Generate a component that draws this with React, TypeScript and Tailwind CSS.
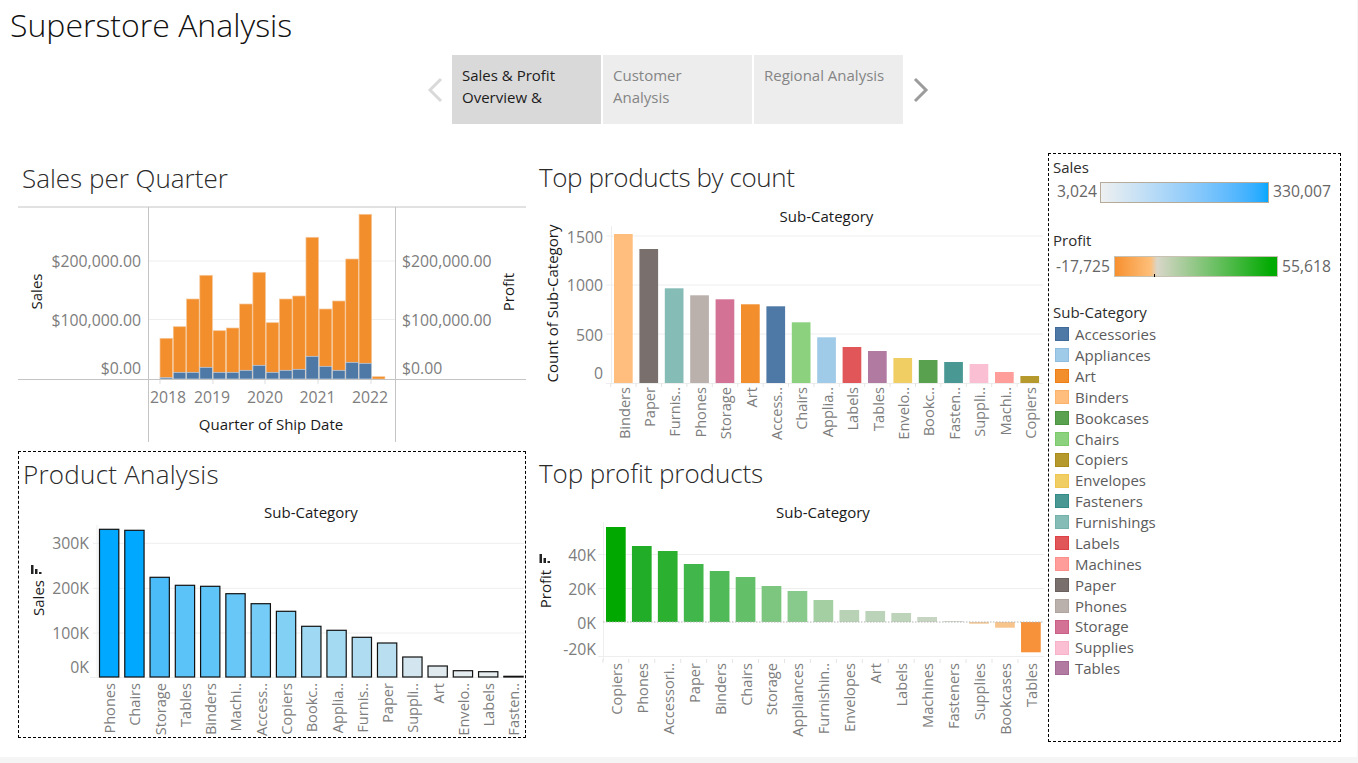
const barColor = "#00a8ff";

const quarters = [
  [338.3, 377.7], [326.7, 372.3], [299, 372.3], [275.3, 367.3], [330.7, 372.3], [328, 372.3],
  [304, 370.3], [272.3, 365.3], [322.7, 372.3], [299, 370.3], [296, 369.3], [237.3, 356.3],
  [309, 366.3], [301, 370.3], [259, 362.3], [214.3, 363.3], [376.7, 379],
];

const salesBars = [
  ["Phones", 529.3, barColor], ["Chairs", 530.3, barColor], ["Storage", 577.3, "#4bbcf8"],
  ["Tables", 585.3, "#5cc3f8"], ["Binders", 586.3, "#5fc4f8"], ["Machi..", 593.7, "#68c7f7"],
  ["Access..", 603.7, "#75ccf6"], ["Copiers", 611.3, "#83d0f5"], ["Bookc..", 626.3, "#9ed8f3"],
  ["Applia..", 630.3, "#a5daf3"], ["Furnis..", 637.3, "#b0dcf1"], ["Paper", 643, "#b9deef"],
  ["Suppli..", 657, "#d3e5ef"], ["Art", 666, "#dfe9ee"], ["Envelo..", 670.7, "#e5ecef"],
  ["Labels", 671.7, "#e7edef"], ["Fasten..", 676.3, "#eef0f0"],
] as const;

const countBars = [
  ["Binders", 234, "#ffbe7d"], ["Paper", 249, "#79706e"], ["Furnis..", 288.3, "#86bcb6"],
  ["Phones", 295.3, "#bab0ac"], ["Storage", 299.3, "#d37295"], ["Art", 304.3, "#f28e2b"],
  ["Access..", 306.3, "#4e79a7"], ["Chairs", 322.3, "#8cd17d"], ["Applia..", 337.3, "#a0cbe8"],
  ["Labels", 347, "#e15759"], ["Tables", 351, "#b07aa1"], ["Envelo..", 358, "#f1ce63"],
  ["Bookc..", 360, "#59a14f"], ["Fasten..", 362, "#499894"], ["Suppli..", 364, "#fabfd2"],
  ["Machi..", 372, "#ff9d9a"], ["Copiers", 376, "#b6992d"],
] as const;

const profitBars = [
  ["Copiers", 527, "#00a800"], ["Phones", 546, "#22ad28"], ["Accessori..", 551, "#2bb02f"],
  ["Paper", 564, "#41b74b"], ["Binders", 571, "#50ba58"], ["Chairs", 577, "#63c068"],
  ["Storage", 586, "#7cc680"], ["Appliances", 591, "#88c98c"], ["Furnishin..", 600, "#a3cfa2"],
  ["Envelopes", 610, "#b8d2b5"], ["Art", 611, "#bbd3b8"], ["Labels", 613, "#bdd3ba"],
  ["Machines", 617, "#c6d5c2"], ["Fasteners", 621, "#d0d8cc"], ["Supplies", 623.7, "#f2c795"],
  ["Bookcases", 627.7, "#f6c48c"], ["Tables", 652.3, "#f7923a"],
] as const;

const legend = [
  ["Accessories", "bg-[#4e79a7] border-[#3f6a9a]"], ["Appliances", "bg-[#a0cbe8] border-[#8fbde0]"],
  ["Art", "bg-[#f28e2b] border-[#ee7f16]"], ["Binders", "bg-[#ffbe7d] border-[#fbb26a]"],
  ["Bookcases", "bg-[#59a14f] border-[#4a9440]"], ["Chairs", "bg-[#8cd17d] border-[#7cc96c]"],
  ["Copiers", "bg-[#b6992d] border-[#a98b1c]"], ["Envelopes", "bg-[#f1ce63] border-[#efc651]"],
  ["Fasteners", "bg-[#499894] border-[#348a86]"], ["Furnishings", "bg-[#86bcb6] border-[#73b1aa]"],
  ["Labels", "bg-[#e15759] border-[#dc4145]"], ["Machines", "bg-[#ff9d9a] border-[#fb8f8c]"],
  ["Paper", "bg-[#79706e] border-[#6a615f]"], ["Phones", "bg-[#bab0ac] border-[#afa4a0]"],
  ["Storage", "bg-[#d37295] border-[#c95f86]"], ["Supplies", "bg-[#fabfd2] border-[#f7b1c8]"],
  ["Tables", "bg-[#b07aa1] border-[#a26a94]"],
];

const tabs = [
  { label: "Sales & Profit Overview &", cls: "bg-[#d9d9d9] text-[#1c1c1c]" },
  { label: "Customer Analysis", cls: "bg-[#ededed] text-[#858585]" },
  { label: "Regional Analysis", cls: "bg-[#ededed] text-[#858585]" },
];

const axisText = "text-[15.8px] fill-[#7d7d7d]";
const tickText = "text-[14.6px] fill-[#7d7d7d]";
const fieldText = "text-[15px] fill-[#1a1a1a]";

function Gridline({ x1, x2, y }: { x1: number; x2: number; y: number }) {
  return <line x1={x1} x2={x2} y1={y} y2={y} stroke="#eeeeee" strokeWidth="1" />;
}

function AxisLabel({ x, y, children }: { x: number; y: number; children: React.ReactNode }) {
  return (
    <text x={x} y={y} textAnchor="end" dominantBaseline="central" className={axisText}>
      {children}
    </text>
  );
}

function VerticalLabel({ x, y, anchor = "middle", className, children }: {
  x: number; y: number; anchor?: "middle" | "end"; className: string; children: React.ReactNode;
}) {
  return (
    <text
      x={x} y={y}
      textAnchor={anchor}
      dominantBaseline="central"
      transform={`rotate(-90 ${x} ${y})`}
      className={className}
    >
      {children}
    </text>
  );
}

function SortIcon({ x, bottom }: { x: number; bottom: number }) {
  return (
    <g fill="#222222">
      <rect x={x} y={bottom - 9} width="2.5" height="9" />
      <rect x={x + 4} y={bottom - 5} width="2.5" height="5" />
      <rect x={x + 8} y={bottom - 2} width="2.5" height="2" />
    </g>
  );
}

function Title({ className, children }: { className: string; children: React.ReactNode }) {
  return (
    <div className={`flex items-center text-[26px] font-light text-[#2a2a2a] ${className}`}>{children}</div>
  );
}

function SalesPerQuarter() {
  return (
    <svg viewBox="18 203 508 245" width="508" height="245" className="block">
      <line x1="18" x2="526" y1="207" y2="207" stroke="#c4c4c4" />
      <Gridline x1={148} x2={395} y={261} />
      <Gridline x1={148} x2={395} y={319.5} />
      {quarters.map(([top, blue], i) => {
        const x = 160 + i * 13.27;
        return (
          <g key={i}>
            <rect x={x} y={top} width="12.6" height={379 - top} fill="#f28e2b" stroke="#f6c79a" strokeWidth="0.7" />
            {i < 16 && (
              <rect x={x} y={blue} width="12.6" height={379 - blue} fill="#4e79a7" stroke="#c5d6e6" strokeWidth="0.7" />
            )}
          </g>
        );
      })}
      <line x1="18" x2="526" y1="379.5" y2="379.5" stroke="#c4c4c4" />
      <line x1="148.5" x2="148.5" y1="207" y2="442" stroke="#c4c4c4" />
      <line x1="395.5" x2="395.5" y1="207" y2="442" stroke="#c4c4c4" />
      {[160, 213, 265, 318, 371].map((x) => (
        <line key={x} x1={x} x2={x} y1="380" y2="384" stroke="#dddddd" />
      ))}
      <AxisLabel x={141} y={261}>$200,000.00</AxisLabel>
      <AxisLabel x={141} y={319.5}>$100,000.00</AxisLabel>
      <AxisLabel x={141} y={368}>$0.00</AxisLabel>
      <text x={402} y={261} dominantBaseline="central" className={axisText}>$200,000.00</text>
      <text x={402} y={319.5} dominantBaseline="central" className={axisText}>$100,000.00</text>
      <text x={402} y={368} dominantBaseline="central" className={axisText}>$0.00</text>
      {[[168, "2018"], [212, "2019"], [265, "2020"], [317.5, "2021"], [370, "2022"]].map(([x, year]) => (
        <text key={year} x={x} y={396.5} textAnchor="middle" dominantBaseline="central" className={axisText}>
          {year}
        </text>
      ))}
      <text x={271} y={424} textAnchor="middle" dominantBaseline="central" className={fieldText}>
        Quarter of Ship Date
      </text>
      <VerticalLabel x={36} y={291.5} className={fieldText}>Sales</VerticalLabel>
      <VerticalLabel x={508} y={292} className={fieldText}>Profit</VerticalLabel>
    </svg>
  );
}

function ProductAnalysis() {
  return (
    <svg viewBox="19 498 506 239" width="506" height="239" className="block">
      <text x={311} y={512} textAnchor="middle" dominantBaseline="central" className={fieldText}>Sub-Category</text>
      <line x1="97" x2="97" y1="525" y2="677" stroke="#eeeeee" />
      <Gridline x1={93} x2={524} y={543.3} />
      <Gridline x1={93} x2={524} y={588.3} />
      <Gridline x1={93} x2={524} y={633} />
      <Gridline x1={90} x2={524} y={677.5} />
      <AxisLabel x={89} y={543}>300K</AxisLabel>
      <AxisLabel x={89} y={588}>200K</AxisLabel>
      <AxisLabel x={89} y={633}>100K</AxisLabel>
      <AxisLabel x={89} y={667}>0K</AxisLabel>
      {salesBars.map(([name, top, color], i) => {
        const x = 99.5 + i * 25.27;
        return (
          <g key={name}>
            <rect x={x} y={top} width="19.3" height={677 - top} fill={color} stroke="#111111" strokeWidth="1.2" />
            <VerticalLabel x={x + 9.6} y={683} anchor="end" className={tickText}>{name}</VerticalLabel>
          </g>
        );
      })}
      <VerticalLabel x={37.5} y={598} className={fieldText}>Sales</VerticalLabel>
      <SortIcon x={31} bottom={574} />
    </svg>
  );
}

function CountChart() {
  return (
    <svg viewBox="530 203 514 245" width="514" height="245" className="block">
      <text x={826.5} y={216} textAnchor="middle" dominantBaseline="central" className={fieldText}>Sub-Category</text>
      <line x1="611.5" x2="611.5" y1="226" y2="383" stroke="#eeeeee" />
      <Gridline x1={606} x2={1043} y={236} />
      <Gridline x1={606} x2={1043} y={285} />
      <Gridline x1={606} x2={1043} y={334} />
      <Gridline x1={606} x2={1043} y={383.5} />
      <AxisLabel x={603} y={237}>1500</AxisLabel>
      <AxisLabel x={603} y={285}>1000</AxisLabel>
      <AxisLabel x={603} y={335}>500</AxisLabel>
      <AxisLabel x={603} y={373}>0</AxisLabel>
      {countBars.map(([name, top, color], i) => {
        const x = 614 + i * 25.4;
        return (
          <g key={name}>
            <rect x={x} y={top} width="18.7" height={383 - top} fill={color} />
            <line x1={x - 3.3} x2={x - 3.3} y1="383" y2="387" stroke="#e5e5e5" />
            <VerticalLabel x={x + 9.5} y={387} anchor="end" className={tickText}>{name}</VerticalLabel>
          </g>
        );
      })}
      <VerticalLabel x={552} y={303.5} className={fieldText}>Count of Sub-Category</VerticalLabel>
    </svg>
  );
}

function ProfitChart() {
  return (
    <svg viewBox="530 498 514 247" width="514" height="247" className="block">
      <text x={823} y={512} textAnchor="middle" dominantBaseline="central" className={fieldText}>Sub-Category</text>
      <line x1="603.5" x2="603.5" y1="522" y2="661" stroke="#eeeeee" />
      <Gridline x1={598} x2={1044} y={554.5} />
      <Gridline x1={598} x2={1044} y={588.5} />
      <Gridline x1={598} x2={1044} y={656.5} />
      <AxisLabel x={596} y={555}>40K</AxisLabel>
      <AxisLabel x={596} y={589}>20K</AxisLabel>
      <AxisLabel x={596} y={622.5}>0K</AxisLabel>
      <AxisLabel x={596} y={648.5}>-20K</AxisLabel>
      {profitBars.map(([name, edge, color], i) => {
        const x = 606 + i * 25.94;
        return (
          <g key={name}>
            <rect x={x} y={Math.min(edge, 622)} width="19.7" height={Math.abs(622 - edge)} fill={color} />
            <line x1={x - 3.1} x2={x - 3.1} y1="659" y2="663" stroke="#e5e5e5" />
            <VerticalLabel x={x + 9.8} y={663} anchor="end" className={tickText}>{name}</VerticalLabel>
          </g>
        );
      })}
      <line x1="603" x2="1044" y1="622" y2="622" stroke="#b5b5b5" strokeDasharray="1.5 1.5" />
      <VerticalLabel x={545} y={589} className={fieldText}>Profit</VerticalLabel>
      <SortIcon x={539.5} bottom={563} />
    </svg>
  );
}

function Chevron({ points, className }: { points: string; className: string }) {
  return (
    <svg viewBox="0 0 16 26" width="16" height="26" fill="none" className={className}>
      <polyline points={points} stroke="currentColor" strokeWidth="3" />
    </svg>
  );
}

function Legend() {
  return (
    <div className="w-[293px] h-[589px] border border-dashed border-black pl-1 text-[15px] text-[#2c2c2c]">
      <div className="h-[28px] pt-[2px]">Sales</div>
      <div className="flex items-center h-[20px] text-[15.7px] text-[#666666]">
        <span className="w-[44px] text-right">3,024</span>
        <div className="ml-[3px] w-[169px] h-[21px] shrink-0 border border-[#b5ab98] bg-gradient-to-r from-[#eef0f0] to-[#00a8ff]" />
        <span className="ml-[4px]">330,007</span>
      </div>
      <div className="h-[28px] mt-[26px] pt-[1px]">Profit</div>
      <div className="flex items-center h-[21px] text-[15.7px] text-[#666666]">
        <span className="w-[57px] text-right">-17,725</span>
        <div className="relative ml-[4px] w-[164px] h-[21px] shrink-0 border border-[#c8c2b4] bg-[linear-gradient(to_right,#f7902f,#fdbf7a_22%,#d9d6c9_26%,#00aa00_97%)]">
          <div className="absolute left-[39px] bottom-[-1px] w-px h-[3px] bg-black" />
        </div>
        <span className="ml-[4px]">55,618</span>
      </div>
      <div className="h-[24px] mt-[23px] flex items-center">Sub-Category</div>
      <div className="flex flex-col">
        {legend.map(([name, cls]) => (
          <div key={name} className="flex items-center h-[20.875px] text-[15px] text-[#5c5c5c]">
            <span className={`ml-[2px] w-[14px] h-[14px] border ${cls}`} />
            <span className="ml-[6px]">{name}</span>
          </div>
        ))}
      </div>
    </div>
  );
}

export default function App() {
  return (
    <div className="w-[1358px] h-[763px] overflow-hidden bg-[#f5f5f5] font-['Open_Sans','Noto_Sans',sans-serif]">
      <div className="w-[1357px] h-[757px] bg-white">
        {/* Header */}
        <div className="h-[50px] flex items-center pl-[10px] text-[32px] font-light text-[#111111]">Superstore Analysis</div>

        {/* Story tabs */}
        <div className="flex items-center h-[69px] mt-[5px] pl-[427px]">
          <Chevron points="14,2 3,13 14,24" className="text-[#d9d9d9] mr-[9px]" />
          <div className="flex gap-[2px]">
            {tabs.map((t) => (
              <div key={t.label} className={`w-[149px] h-[69px] pl-[10px] pr-[14px] pt-[9px] text-[15px] leading-[22px] ${t.cls}`}>
                {t.label}
              </div>
            ))}
          </div>
          <Chevron points="2,2 13,13 2,24" className="text-[#9c9c9c] ml-[10px]" />
        </div>

        {/* Dashboard */}
        <div className="flex mt-[29px] pl-[18px]">
          <div className="w-[508px]">
            <Title className="h-[50px] pl-[4px]">Sales per Quarter</Title>
            <SalesPerQuarter />
            <div className="h-[3px]" />
            <div className="border border-dashed border-black">
              <Title className="h-[46px] pl-[4px] pb-[2px] tracking-[0.25px]">Product Analysis</Title>
              <ProductAnalysis />
            </div>
          </div>
          <div className="w-[514px] ml-[4px]">
            <Title className="h-[50px] pl-[9px] pb-[1px] tracking-[-0.4px]">Top products by count</Title>
            <CountChart />
            <Title className="h-[50px] pl-[9px] tracking-[-0.1px]">Top profit products</Title>
            <ProfitChart />
          </div>
          <div className="ml-[4px]">
            <Legend />
          </div>
        </div>
      </div>
    </div>
  );
}
